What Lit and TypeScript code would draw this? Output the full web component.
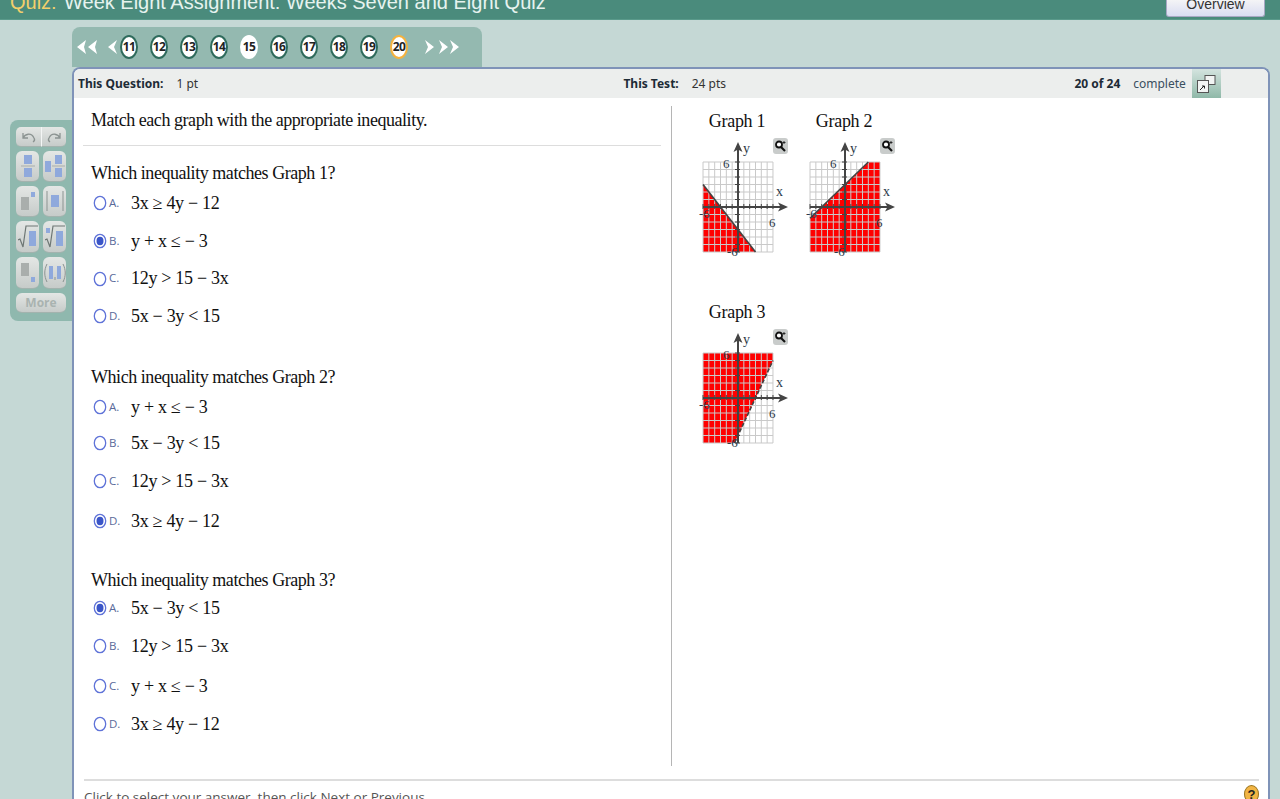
import { LitElement, html, css, svg } from "lit";
import { customElement } from "lit/decorators.js";

type Opt = { l: string; m: string; sel?: boolean; h: number };
const M1 = "3x ≥ 4y − 12", M2 = "y + x ≤ − 3", M3 = "12y > 15 − 3x", M4 = "5x − 3y < 15";
const questions: { q: string; top: number; opts: Opt[] }[] = [
  { q: "Which inequality matches Graph 1?", top: 16, opts: [
    { l: "A.", m: M1, h: 38 }, { l: "B.", m: M2, sel: true, h: 38 }, { l: "C.", m: M3, h: 37 }, { l: "D.", m: M4, h: 38 } ] },
  { q: "Which inequality matches Graph 2?", top: 31, opts: [
    { l: "A.", m: M2, h: 38 }, { l: "B.", m: M4, h: 34 }, { l: "C.", m: M3, h: 42 }, { l: "D.", m: M1, sel: true, h: 38 } ] },
  { q: "Which inequality matches Graph 3?", top: 29, opts: [
    { l: "A.", m: M4, sel: true, h: 34 }, { l: "B.", m: M3, h: 42 }, { l: "C.", m: M2, h: 38 }, { l: "D.", m: M1, h: 38 } ] },
];
const graphs = [
  { t: "Graph 1", pts: [[-6, 3], [3, -6], [-6, -6]], line: [[-6, 3], [3, -6]], dash: false },
  { t: "Graph 2", pts: [[-6, -1.5], [4, 6], [6, 6], [6, -6], [-6, -6]], line: [[-6, -1.5], [4, 6]], dash: false },
  { t: "Graph 3", pts: [[-6, 6], [6, 6], [6, 5], [-0.6, -6], [-6, -6]], line: [[-0.6, -6], [6, 5]], dash: true },
];
const X = (v: number) => 41 + v * 5.83;
const Y = (v: number) => 71 - v * 7.5;
const range = Array.from({ length: 13 }, (_, i) => i - 6);

function graphSvg(g: (typeof graphs)[number]) {
  const poly = g.pts.map((p) => `${X(p[0])},${Y(p[1])}`).join(" ");
  return html`<svg class="plot" width="94" height="125" viewBox="0 0 94 125">
    ${svg`<polygon points=${poly} fill="#f00"></polygon>
    ${range.map((i) => svg`
      <line x1=${X(i)} x2=${X(i)} y1="26" y2="116" stroke="#c9c9c9" stroke-width="1"></line>
      <line x1="6" x2="76" y1=${Y(i)} y2=${Y(i)} stroke="#c9c9c9" stroke-width="1"></line>`)}
    ${range.map((i) => svg`
      <line x1=${X(i)} x2=${X(i)} y1="68" y2="73" stroke="#444" stroke-width="1"></line>
      <line x1="38" x2="43" y1=${Y(i)} y2=${Y(i)} stroke="#444" stroke-width="1"></line>`)}
    <line x1=${X(g.line[0][0])} y1=${Y(g.line[0][1])} x2=${X(g.line[1][0])} y2=${Y(g.line[1][1])}
      stroke="#444" stroke-width="1.6" stroke-dasharray=${g.dash ? "4 2" : "none"}></line>
    <line x1="6" x2="86" y1="71" y2="71" stroke="#444" stroke-width="2"></line>
    <line x1="41" x2="41" y1="116" y2="10" stroke="#444" stroke-width="2"></line>
    <path d="M41 6 L45.5 16 L41 13.5 L36.5 16 Z" fill="#444"></path>
    <path d="M91 71 L81 66.5 L83.5 71 L81 75.5 Z" fill="#444"></path>
    <g font-family="'Liberation Serif',serif" font-size="14" fill="#2c3a4a">
      <text x="46" y="17">y</text>
      <text x="79" y="60">x</text>
      <text x="26" y="32" font-size="13">6</text>
      <text x="2" y="82" font-size="13">-6</text>
      <text x="72" y="91" font-size="13">6</text>
      <text x="30" y="120" font-size="13">-6</text>
    </g>`}
  </svg>`;
}

const tri = (d: string) => html`<svg class="arrow" width="22" height="18" viewBox="0 0 22 18"><path d=${d} fill="#fff"></path></svg>`;

@customElement("app-root")
class AppRoot extends LitElement {
  static styles = css`
    :host { display: block; width: 1280px; height: 799px; overflow: hidden; background: #c5d8d5; font-family: "Liberation Sans", Arial, sans-serif; }
    .header { height: 20px; box-sizing: border-box; border-bottom: 1px solid #5a9a8b; background: #4a8b7c; display: flex; align-items: flex-end; overflow: hidden; padding: 0 15px 0 10px; }
    .title { display: flex; font-size: 20px; line-height: 24px; margin-bottom: 5px; height: 24px; white-space: nowrap; color: #e6f3ef; }
    .title b { font-weight: 400; color: #f3cf6b; width: 54px; }
    .overview { margin-left: auto; width: 99px; height: 17px; margin-bottom: 2px; box-sizing: border-box; text-align: center; font-size: 14px; line-height: 8px; color: #333; background: linear-gradient(#f4f4f6, #d9ddf2); border: 1px solid #a8a8c4; border-top: 0; border-radius: 0 0 3px 3px; font-family: "Liberation Sans", sans-serif; }
    .body { display: flex; align-items: flex-start; }
    .palette { margin: 100px 0 0 10px; width: 62px; height: 201px; box-sizing: border-box; padding: 7px 6px; background: #8fb8ae; border-radius: 8px 0 0 8px; display: grid; grid-template-columns: 23px 23px; column-gap: 4px; grid-template-rows: 20px 31px 31px 32px 32px 20px; row-gap: 4px; flex: none; }
    .tb { background: linear-gradient(#e4e7e5, #c6cbc9); border-radius: 6px; border-bottom: 1px solid #a3b3ae; box-sizing: border-box; display: flex; align-items: center; justify-content: center; }
    .undo { border-radius: 5px 0 0 5px; margin-right: -2px; }
    .redo { border-radius: 0 5px 5px 0; margin-left: -2px; border-left: 1px solid #f4f6f5; }
    .more { grid-column: 1 / 3; font-size: 12px; font-weight: 700; color: #a9b3b0; font-family: "Open Sans", sans-serif; }
    .main { width: 1198px; padding-top: 7px; flex: none; }
    .nav { width: 410px; height: 40px; box-sizing: border-box; background: #94b9b0; border-radius: 8px 8px 0 0; display: flex; align-items: center; padding: 0 5px 0 5px; }
    .arrow { flex: none; display: block; }
    .nums { display: flex; gap: 12px; margin: 0 9px 0 -1px; }
    .n { width: 18px; height: 24px; box-sizing: border-box; border: 2px solid #2f6b5c; border-radius: 50%; background: #fff; font: 700 12px/20px "Noto Sans", sans-serif; color: #222; text-align: center; letter-spacing: -0.5px; }
    .n.cur { border-color: #fff; }
    .n.last { border-color: #f5b23e; }
    .panel { background: #fff; border: 2px solid #7f93b8; border-bottom: 0; border-radius: 8px 8px 0 0; height: 740px; box-sizing: border-box; }
    .bar { height: 29px; background: #eceeed; border-radius: 6px 6px 0 0; display: flex; align-items: center; padding-left: 4px; font: 12px "Noto Sans", sans-serif; color: #333; overflow: hidden; }
    .bar b { font-weight: 700; color: #1d2b36; }
    .pt { width: 447px; margin-left: 13px; }
    .tt { width: 451px; }
    .tt b { margin-right: 13px; }
    .ct { margin-left: 13px; color: #3a4f5f; }
    .exp { margin-left: 6px; width: 29px; height: 29px; background: linear-gradient(#d4e4df, #8fb8a8); display: flex; align-items: center; justify-content: center; flex: none; }
    .content { display: flex; height: 660px; margin-top: 8px; }
    .left { width: 598px; box-sizing: border-box; border-right: 1px solid #b5b5b5; padding: 3px 10px 0 9px; flex: none; }
    .intro, .q { font: 18px/22px "Liberation Serif", serif; color: #111; padding-left: 8px; letter-spacing: -0.45px; }
    .intro { padding-bottom: 14px; border-bottom: 1px solid #ddd; }
    .opt { display: flex; align-items: center; padding-left: 10px; }
    .radio { flex: none; display: block; }
    .lt { width: 22px; margin-left: 2px; font: 11.5px "Open Sans", sans-serif; color: #5a6a9a; position: relative; top: -1px; }
    .m { font: 18px "Liberation Serif", serif; color: #111; white-space: pre; letter-spacing: -0.3px; }
    .right { padding: 3px 0 0 25px; display: grid; grid-template-columns: 107px 107px; grid-auto-rows: 191px; }
    .g { position: relative; }
    .gt { font: 18px/24px "Liberation Serif", serif; color: #111; width: 80px; text-align: center; letter-spacing: -0.3px; }
    .plot { display: block; margin-top: 3px; }
    .zoom { position: absolute; left: 76px; top: 29px; }
    .foot { margin: 13px 9px 0 10px; border-top: 2px solid #ddd; display: flex; justify-content: space-between; font: 13.5px "Open Sans", sans-serif; color: #555; padding-top: 7px; }
    .help { width: 15px; height: 18px; border-radius: 50%; background: #f2b544; border: 1px solid #9a7420; box-sizing: border-box; color: #222; font: 700 13px/17px "Liberation Sans", sans-serif; text-align: center; margin-top: -3px; flex: none; }
  `;

  private tool(content: unknown, cls = "") {
    return html`<div class="tb ${cls}">${content}</div>`;
  }

  render() {
    const blue = "#8fa9dc", grey = "#a9aeac";
    return html`
      <div class="header">
        <div class="title"><b>Quiz:</b><span>Week Eight Assignment: Weeks Seven and Eight Quiz</span></div>
        <div class="overview">Overview</div>
      </div>
      <div class="body">
        <div class="palette">
          ${this.tool(html`<svg width="16" height="12" viewBox="0 0 16 12" fill="none" stroke="#8b9391" stroke-width="1.3"><path d="M2 2v5h5M2 7c2-4 8-6 11 0 1 1.5.5 3-1 4"/></svg>`, "undo")}
          ${this.tool(html`<svg width="16" height="12" viewBox="0 0 16 12" fill="none" stroke="#8b9391" stroke-width="1.3"><path d="M14 2v5H9M14 7C12 3 6 1 3 7c-1 1.5-.5 3 1 4"/></svg>`, "redo")}
          ${this.tool(html`<svg width="16" height="24" viewBox="0 0 16 24"><rect x="4" y="1" width="8" height="9" fill="${blue}"/><rect x="1" y="11.5" width="14" height="1" fill="${grey}"/><rect x="4" y="14" width="8" height="9" fill="${blue}"/></svg>`)}
          ${this.tool(html`<svg width="20" height="24" viewBox="0 0 20 24"><rect x="0" y="7" width="6" height="11" fill="${blue}"/><rect x="10" y="1" width="7" height="9" fill="${blue}"/><rect x="7" y="11.5" width="13" height="1" fill="${grey}"/><rect x="10" y="14" width="7" height="9" fill="${blue}"/></svg>`)}
          ${this.tool(html`<svg width="16" height="18" viewBox="0 0 16 18"><rect x="1" y="5" width="8" height="13" fill="${grey}"/><rect x="11" y="0" width="4" height="5" fill="${blue}"/></svg>`)}
          ${this.tool(html`<svg width="18" height="20" viewBox="0 0 18 20"><rect x="0.5" y="0" width="1" height="20" fill="#8b9391"/><rect x="16.5" y="0" width="1" height="20" fill="#8b9391"/><rect x="5" y="4" width="8" height="12" fill="${blue}"/></svg>`)}
          ${this.tool(html`<svg width="20" height="24" viewBox="0 0 20 24" fill="none"><path d="M0 15l2-1 3 8 3-21h12" stroke="#6e7775" stroke-width="1.2"/><rect x="11" y="6" width="7" height="15" fill="${blue}"/></svg>`)}
          ${this.tool(html`<svg width="20" height="24" viewBox="0 0 20 24" fill="none"><path d="M0 15l2-1 3 8 3-21h12" stroke="#6e7775" stroke-width="1.2"/><rect x="1" y="3" width="4" height="5" fill="${blue}"/><rect x="11" y="6" width="7" height="15" fill="${blue}"/></svg>`)}
          ${this.tool(html`<svg width="16" height="20" viewBox="0 0 16 20"><rect x="1" y="0" width="8" height="13" fill="${grey}"/><rect x="11" y="14" width="4" height="5" fill="${blue}"/></svg>`)}
          ${this.tool(html`<svg width="22" height="20" viewBox="0 0 22 20" fill="none"><path d="M3 1C0 7 0 13 3 19M19 1c3 6 3 12 0 18" stroke="#8b9391"/><rect x="5" y="3" width="4" height="13" fill="${blue}"/><rect x="13" y="3" width="4" height="13" fill="${blue}"/><rect x="10.5" y="14" width="1" height="3" fill="#8b9391"/></svg>`)}
          ${this.tool("More", "more")}
        </div>
        <div class="main">
          <div class="nav">
            ${tri("M0 9 L9 2 L7 9 L9 16 Z M11 9 L20 2 L18 9 L20 16 Z")}
            ${tri("M9 9 L18 2 L15 9 L18 16 Z")}
            <div class="nums">
              ${[11, 12, 13, 14, 15, 16, 17, 18, 19, 20].map((n) => html`<div class="n ${n === 15 ? "cur" : n === 20 ? "last" : ""}">${n}</div>`)}
            </div>
            ${tri("M8 2 L17 9 L8 16 L11 9 Z")}
            ${tri("M0 2 L9 9 L0 16 L3 9 Z M11 2 L20 9 L11 16 L14 9 Z")}
          </div>
          <div class="panel">
            <div class="bar">
              <b>This Question:</b><span class="pt">1 pt</span>
              <span class="tt"><b>This Test:</b>24 pts</span>
              <b>20 of 24</b><span class="ct">complete</span>
              <div class="exp"><svg width="20" height="20" viewBox="0 0 20 20" fill="#f2f4f3" stroke="#555"><rect x="9" y="1.5" width="10" height="9"/><rect x="1.5" y="6.5" width="11" height="12"/><path d="M4 16l4-4M6 12h2.5v2.5" fill="none" stroke="#222"/></svg></div>
            </div>
            <div class="content">
              <div class="left">
                <div class="intro">Match each graph with the appropriate inequality.</div>
                ${questions.map((q) => html`
                  <div class="q" style="margin-top:${q.top}px">${q.q}</div>
                  ${q.opts.map((o) => html`
                    <div class="opt" style="height:${o.h}px">
                      <svg class="radio" width="14" height="16" viewBox="0 0 14 16">
                        <ellipse cx="7" cy="8" rx="5.7" ry="6.7" fill="#fff" stroke="#5f73d8" stroke-width="1.3"></ellipse>
                        ${o.sel ? svg`<ellipse cx="7" cy="8" rx="3.5" ry="4.2" fill="#3a55c8"></ellipse>` : ""}
                      </svg>
                      <span class="lt">${o.l}</span>
                      <span class="m">${o.m}</span>
                    </div>`)}
                `)}
              </div>
              <div class="right">
                ${graphs.map((g) => html`
                  <div class="g">
                    <div class="gt">${g.t}</div>
                    ${graphSvg(g)}
                    <svg class="zoom" width="15" height="16" viewBox="0 0 15 16">
                      <rect width="15" height="16" rx="3" fill="#c9cccb"></rect>
                      <circle cx="6" cy="6.5" r="3" fill="#fff" stroke="#111" stroke-width="1.8"></circle>
                      <path d="M8 9l4 4" stroke="#111" stroke-width="2.2"></path>
                      <path d="M11 3v3M9.5 4.5h3" stroke="#111" stroke-width="0.8"></path>
                    </svg>
                  </div>`)}
              </div>
            </div>
            <div class="foot"><span>Click to select your answer, then click Next or Previous.</span><div class="help">?</div></div>
          </div>
        </div>
      </div>
    `;
  }
}
